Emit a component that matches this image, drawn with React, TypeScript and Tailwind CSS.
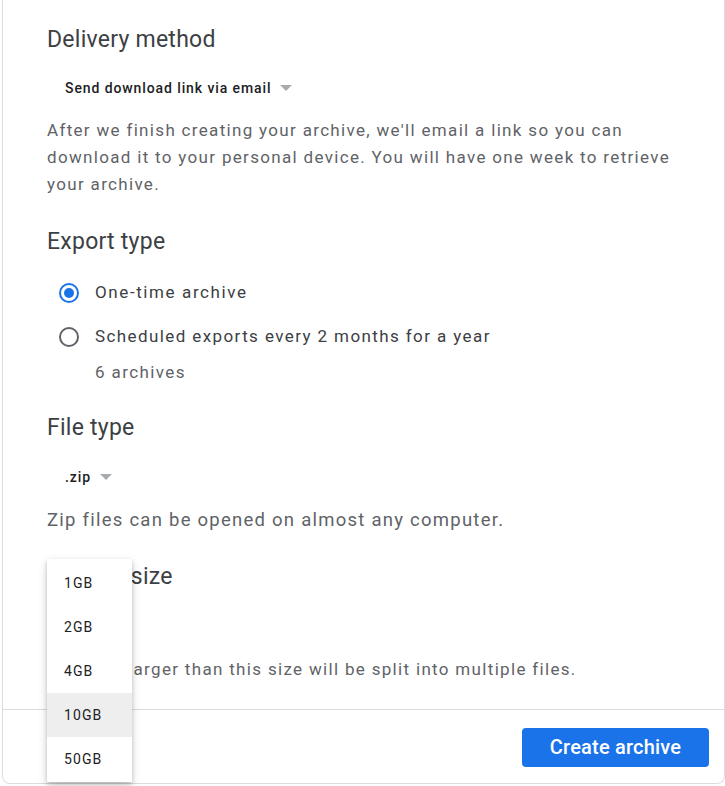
import React from "react";

const Arrow = () => (
  <svg width="12" height="6" viewBox="0 0 12 6" className="ml-[9px]">
    <path d="M0 0 L12 0 L6 6 Z" fill="#a8abae" />
  </svg>
);

const Heading = ({ children }: { children: React.ReactNode }) => (
  <div className="text-[23px] leading-[28px] tracking-[0.25px] text-[#3c4043] font-['Roboto',sans-serif]">{children}</div>
);

const Para = ({ children }: { children: React.ReactNode }) => (
  <div className="text-[17px] leading-[27px] tracking-[1.32px] text-[#5f6368]">{children}</div>
);

export default function App() {
  return (
    <div className="w-[725px] h-[786px] bg-white font-['Roboto',sans-serif] pl-[2px] overflow-hidden relative">
      <div className="w-[723px] h-[784px] border-x border-b border-[#dadce0] rounded-b-[8px] flex flex-col">
        <div className="pl-[44px] pr-[30px] flex-1">
          <div className="pt-[26px]">
            <Heading>Delivery method</Heading>
          </div>
          <div className="h-[36px] mt-[16px] flex items-center pl-[18px] text-[14px] font-medium tracking-[0.9px] text-[#202124]">
            Send download link via email
            <Arrow />
          </div>
          <div className="mt-[11px]">
            <Para>
              After we finish creating your archive, we'll email a link so you can download it to your personal device. You will have one week to retrieve your archive.
            </Para>
          </div>
          <div className="mt-[30px]">
            <Heading>Export type</Heading>
          </div>
          <div className="mt-[15px] flex flex-col">
            <div className="h-[44px] flex items-center">
              <div className="w-[20px] h-[20px] ml-[12px] rounded-full border-2 border-[#1a73e8] flex items-center justify-center">
                <div className="w-[10px] h-[10px] rounded-full bg-[#1a73e8]" />
              </div>
              <span className="ml-[16px] text-[17px] tracking-[1.6px] text-[#3c4043]">One-time archive</span>
            </div>
            <div className="h-[44px] flex items-center">
              <div className="w-[20px] h-[20px] ml-[12px] rounded-full border-2 border-[#5f6368]" />
              <span className="ml-[16px] text-[17px] tracking-[1.4px] text-[#3c4043]">Scheduled exports every 2 months for a year</span>
            </div>
            <div className="pl-[48px] h-[27px] leading-[27px] text-[17px] tracking-[1.4px] text-[#5f6368]">6 archives</div>
          </div>
          <div className="mt-[28px]">
            <Heading>File type</Heading>
          </div>
          <div className="h-[36px] mt-[17px] flex items-center pl-[18px] text-[14px] font-medium tracking-[0.9px] text-[#202124]">
            .zip
            <Arrow />
          </div>
          <div className="mt-[12px] text-[18.5px] leading-[27px] tracking-[1.25px] text-[#5f6368]">
            Zip files can be opened on almost any computer.
          </div>
          <div className="mt-[29px]">
            <Heading>Archive size</Heading>
          </div>
          <div className="h-[36px] mt-[13px] flex items-center pl-[18px] text-[14px] font-medium tracking-[0.9px] text-[#202124]">
            2GB
            <Arrow />
          </div>
          <div className="mt-[16px]">
            <Para>Archives larger than this size will be split into multiple files.</Para>
          </div>
        </div>
        <div className="border-t border-[#dadce0] h-[74px] flex items-start justify-end pr-[15px] pt-[18px]">
          <button className="w-[187px] h-[39px] rounded-[4px] bg-[#1a73e8] text-white text-[20px] font-medium tracking-[0.2px] leading-[37px]">
            Create archive
          </button>
        </div>
      </div>
      <div className="absolute left-[47px] top-[559px] w-[85px] h-[223px] bg-white shadow-[0_2px_4px_rgba(0,0,0,0.2),0_4px_10px_rgba(0,0,0,0.14)] pt-[2px]">
        {["1GB", "2GB", "4GB", "10GB", "50GB"].map((s) => (
          <div
            key={s}
            className={`h-[44px] flex items-center pl-[17px] text-[14px] tracking-[1.1px] text-[#202124] ${s === "10GB" ? "bg-[#eeeeee]" : ""}`}
          >
            {s}
          </div>
        ))}
      </div>
    </div>
  );
}
